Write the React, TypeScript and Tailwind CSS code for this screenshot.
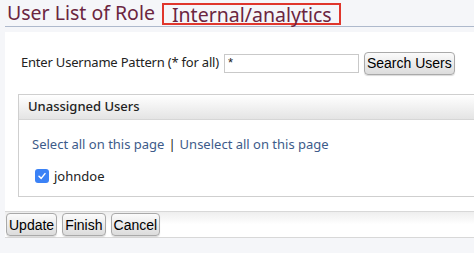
import React from 'react';

const btn =
  "shrink-0 h-[23px] px-[2px] rounded-[4px] border border-[#a9a9a9] bg-gradient-to-b from-[#fbfbfb] to-[#dcdcdc] text-[14px] leading-none text-black whitespace-nowrap font-['Liberation_Sans',Arial,sans-serif] shadow-[0_1px_1px_rgba(0,0,0,0.15)]";

export default function App() {
  return (
    <div className="w-[474px] h-[253px] overflow-hidden bg-[#f5f6f9] font-['Noto_Sans',sans-serif]">
      <div className="pl-[7px] pt-[1px] h-[26px] flex items-start">
        <h1 className="text-[19.5px] leading-[24px] text-[#6b2540] whitespace-nowrap flex">
          <span>User List of Role</span>
          <span className="ml-[7px] border-2 border-[#e0362c] pl-[8px] pr-[7px] h-[22px] leading-[20px] mt-[2px]">
            Internal/analytics
          </span>
        </h1>
      </div>
      <div className="ml-[5px] border-t border-[#aeb9cc] bg-white">
        <div className="h-[5px] bg-[#f5f6f9]" />
        <div className="h-[54px] pt-[8px] pl-[16px] flex items-center gap-[5px] text-[13px] text-[#222] whitespace-nowrap">
          <span className="shrink-0 tracking-[-0.2px]">Enter Username Pattern (* for all)</span>
          <input
            readOnly
            value="*"
            className="shrink-0 w-[135px] h-[19px] border border-[#c9c9c9] px-[3px] text-[13px] outline-none font-['Liberation_Sans',Arial,sans-serif]"
          />
          <button className={btn + " px-[1px] text-[13.5px]"}>Search Users</button>
        </div>
        <div className="mt-[8px] ml-[13px] border border-r-0 border-[#cfcfcf] h-[103px]">
          <div className="h-[25px] pl-[9px] flex items-center bg-gradient-to-b from-white to-[#e4e4e4] border-b border-[#d6d6d6] text-[13px] font-medium text-[#222]">
            Unassigned Users
          </div>
          <div className="pl-[13px] pt-[15px] text-[13px]">
            <div className="text-[#3d5b8a] whitespace-nowrap">
              <span>Select all on this page</span>
              <span className="text-[#222] mx-[4px]">|</span>
              <span>Unselect all on this page</span>
            </div>
            <div className="mt-[12px] ml-[3px] flex items-center gap-[5px] text-[#222]">
              <span className="w-[14px] h-[14px] rounded-[3px] bg-[#3b82f6] flex items-center justify-center">
                <svg width="10" height="10" viewBox="0 0 10 10">
                  <path d="M2 5.2 L4.2 7.4 L8 2.6" fill="none" stroke="white" strokeWidth="1.5" strokeLinecap="round" strokeLinejoin="round" />
                </svg>
              </span>
              <span>johndoe</span>
            </div>
          </div>
        </div>
        <div className="h-[14px]" />
      </div>
      <div className="ml-[5px] h-[27px] border-t border-b border-[#d8d8d8] bg-gradient-to-b from-[#eeeeee] via-white to-white flex items-center gap-[5px] pl-[1px]">
        <button className={btn}>Update</button>
        <button className={btn}>Finish</button>
        <button className={btn}>Cancel</button>
      </div>
    </div>
  );
}
